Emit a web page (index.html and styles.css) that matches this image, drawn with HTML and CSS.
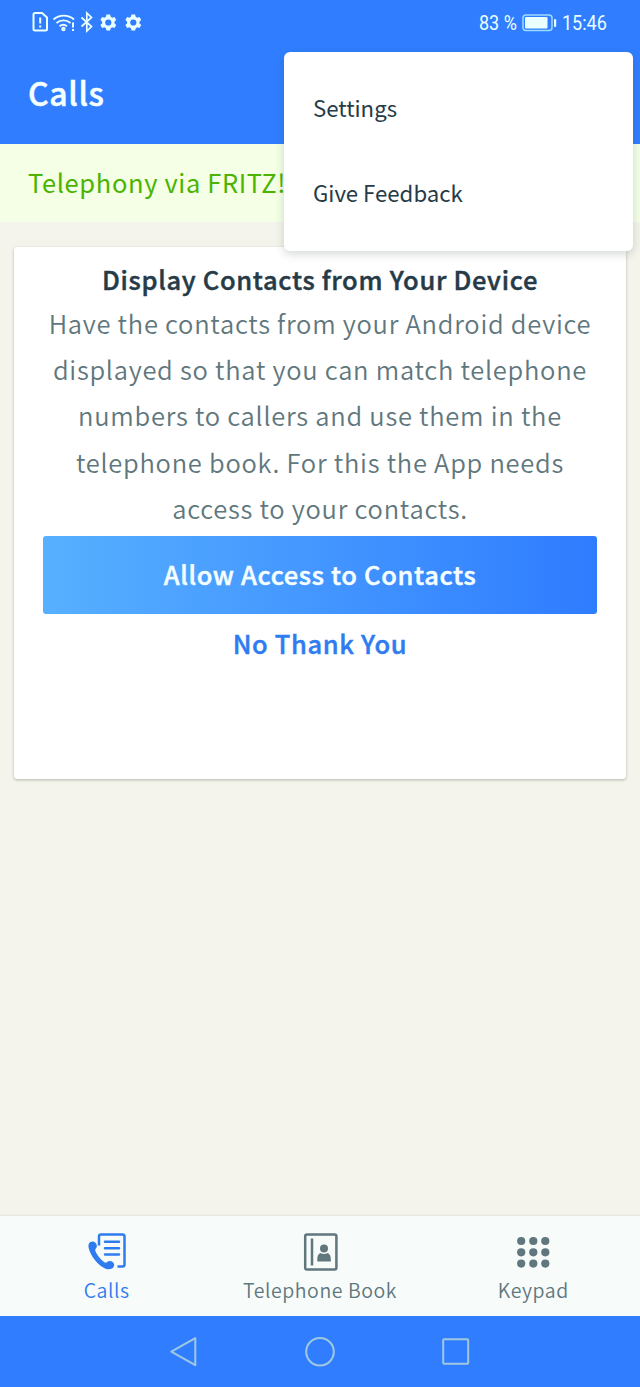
FILE: index.html
```html
<!DOCTYPE html>
<html lang="en">
<head>
<meta charset="utf-8">
<title>Calls</title>
<link rel="stylesheet" href="styles.css">
</head>
<body>
<div class="screen">
  <header class="top">
    <div class="status">
      <svg class="status-icons" width="112" height="24" viewBox="0 0 112 24" fill="none" stroke="#eaffff" stroke-width="2">
        <path d="M4 3h7l5 4.500v11.500a1.500 1.500 0 0 1-1.500 1.500H4A1.500 1.500 0 0 1 2.500 19V4.500A1.500 1.500 0 0 1 4 3z"/>
        <path d="M9.200 7.500v6M9.200 15.500v2"/>
        <path d="M22.500 9.500a15.500 15.500 0 0 1 20.500 0M25.500 13a10.500 10.500 0 0 1 14 0M28.500 16.200a6 6 0 0 1 7.500 0" stroke-width="1.900"/>
        <circle cx="32.400" cy="19" r="2.200" fill="#eaffff" stroke="none"/>
        <path d="M42 12.500v5M42 19v2"/>
        <path d="M50.500 7.500 60.500 16.500 55.800 21V3L60.500 7.500 50.500 16.500" stroke-width="1.700"/>
        <g id="gear" fill="#eaffff" stroke="none">
          <path fill-rule="evenodd" d="M75.500 4.500h3.600l.6 2.300 1.500.9 2.300-.8 1.700 3-1.700 1.700v1.800l1.700 1.700-1.700 3-2.300-.8-1.500.9-.6 2.300h-3.600l-.6-2.300-1.500-.9-2.300.8-1.700-3 1.700-1.700v-1.800l-1.700-1.700 1.700-3 2.300.8 1.500-.9zM77.300 9.400a3.100 3.100 0 1 0 0 6.200 3.100 3.100 0 0 0 0-6.200z"/>
        </g>
        <use href="#gear" x="25"/>
      </svg>
      <div class="status-right">
        <span class="percent">83 %</span>
        <svg class="battery" width="36" height="18" viewBox="0 0 36 18">
          <rect x="1" y="1" width="29" height="15.500" rx="3" fill="none" stroke="#9cdcff" stroke-width="1.500"/>
          <rect x="3" y="3" width="22.500" height="11.500" rx="1" fill="#eaffff"/>
          <rect x="32" y="5" width="2.200" height="8" rx="1" fill="#eaffff"/>
        </svg>
        <span class="time">15:46</span>
      </div>
    </div>
    <h1 class="title">Calls</h1>
  </header>
  <div class="banner">Telephony via FRITZ!</div>
  <main class="content">
    <section class="card">
      <h2 class="card-title">Display Contacts from Your Device</h2>
      <p class="card-text">Have the contacts from your Android device<br>displayed so that you can match telephone<br>numbers to callers and use them in the<br>telephone book. For this the App needs<br>access to your contacts.</p>
      <button class="primary">Allow Access to Contacts</button>
      <button class="link">No Thank You</button>
    </section>
  </main>
  <nav class="tabs">
    <a class="tab active">
      <svg width="40" height="40" viewBox="0 0 40 40" fill="none" stroke="currentColor" stroke-width="2.500">
        <path d="M12 13.500V4.500a2 2 0 0 1 2-2H35.500a2 2 0 0 1 2 2V32.500a2 2 0 0 1-2 2h-5"/>
        <path d="M18 9.800H32M18 16.200H32M18 22.600H32" stroke-linecap="round"/>
        <path fill="currentColor" stroke="none" d="M3 10.300c1.800-1.400 4.200-1.200 5.700.6 1.600 2 1.600 4.200 0 5.900-.8.900-.5 2.100.5 4 2 3.700 4.500 6.700 7.800 9.200 1.200.9 2.100.9 3.100 0 1.800-1.500 4.200-1.300 5.900.3 1.800 1.800 1.700 4.200-.5 5.900-2.400 1.700-5.600 1.400-8.700-.4C9.800 31.800 4 24.300 1.800 16.500c-.7-2.600-.5-4.800 1.200-6.200z"/>
      </svg>
      <span>Calls</span>
    </a>
    <a class="tab">
      <svg width="40" height="40" viewBox="0 0 40 40" fill="none" stroke="currentColor" stroke-width="2.500">
        <rect x="5.200" y="2.500" width="31.200" height="35" rx="1.800"/>
        <path d="M12 6.500v27"/>
        <g fill="currentColor" stroke="none">
          <circle cx="24" cy="16.500" r="4"/>
          <path d="M17.300 29.500v-2.500c0-3 1-4.800 3-6 2.300 1.400 5.200 1.400 7.500 0 2 1.200 3 3 3 6v2.500z"/>
        </g>
      </svg>
      <span>Telephone Book</span>
    </a>
    <a class="tab">
      <svg width="40" height="40" viewBox="0 0 40 40" fill="currentColor">
        <circle cx="8.200" cy="9" r="4.100"/><circle cx="20.300" cy="9" r="4.100"/><circle cx="32.300" cy="9" r="4.100"/>
        <circle cx="8.200" cy="20.300" r="4.100"/><circle cx="20.300" cy="20.300" r="4.100"/><circle cx="32.300" cy="20.300" r="4.100"/>
        <circle cx="8.200" cy="31.600" r="4.100"/><circle cx="20.300" cy="31.600" r="4.100"/><circle cx="32.300" cy="31.600" r="4.100"/>
      </svg>
      <span>Keypad</span>
    </a>
  </nav>
  <footer class="sysnav">
    <svg width="32" height="32" viewBox="0 0 32 32"><path d="M27.300 2.200v27L3.300 15.700z"/></svg>
    <svg width="32" height="32" viewBox="0 0 32 32"><circle cx="16" cy="15.700" r="13.800"/></svg>
    <svg width="32" height="32" viewBox="0 0 32 32"><rect x="3.200" y="3.200" width="25" height="24.500" rx="1"/></svg>
  </footer>
  <div class="menu">
    <div class="menu-item">Settings</div>
    <div class="menu-item">Give Feedback</div>
  </div>
</div>
</body>
</html>
```
FILE: styles.css
```css
* { box-sizing: border-box; }
body { margin: 0; font-family: "Noto Sans CJK SC", "Noto Sans", sans-serif; }
h1, h2, p { margin: 0; }
button { border: 0; padding: 0; font: inherit; background: none; }
.screen {
  position: relative;
  display: flex;
  flex-direction: column;
  width: 640px;
  height: 1387px;
  overflow: hidden;
  background: #f4f4ec;
  white-space: nowrap;
}
.top { height: 144px; background: #307eff; color: #f6ffff; }
.status {
  display: flex;
  justify-content: space-between;
  align-items: center;
  height: 45px;
  padding: 0 33px 0 31.200px;
}
.status-icons { margin-top: -1px; }
.status-right {
  display: flex;
  align-items: center;
  font-family: Roboto, sans-serif;
  font-size: 20px;
  color: #eaffff;
}
.percent { width: 38px; transform: scaleX(.9); transform-origin: left; }
.battery { margin: 1px 4px 0 5px; }
.time { width: 45px; transform: scaleX(.9); transform-origin: left; }
.title {
  padding-left: 28px;
  font-size: 32px;
  font-weight: 500;
  line-height: 95px;
  letter-spacing: .6px;
}
.title, .card-title, .primary, .link { -webkit-text-stroke: .45px currentColor; }
.banner {
  height: 78px;
  padding-left: 28px;
  background: #f4ffe6;
  color: #4cb400;
  font-size: 25.500px;
  line-height: 76px;
  letter-spacing: .62px;
}
.content { flex: 1; padding: 25px 14px 0; }
.card {
  display: flex;
  flex-direction: column;
  height: 532px;
  padding: 11px 29px 0;
  border-radius: 3px;
  background: #fff;
  box-shadow: 0 1px 3px rgba(50, 70, 50, .35);
  text-align: center;
}
.card-title { font-size: 25.500px; font-weight: 500; line-height: 42px; letter-spacing: .68px; color: #263b48; }
.card-text { margin: 0 -29px; font-size: 25.500px; font-weight: 350; line-height: 46.200px; letter-spacing: .74px; color: #5f777d; }
.primary {
  height: 78px;
  margin-top: 5px;
  padding-bottom: 4px;
  border-radius: 3px;
  background: linear-gradient(90deg, #57b0ff, #2f7cff);
  color: #f6ffff;
  font-size: 25.500px;
  font-weight: 500;
  letter-spacing: .64px;
}
.link { margin-top: 5px; line-height: 48px; color: #2f7cf0; font-size: 25.500px; font-weight: 500; letter-spacing: .64px; }
.tabs {
  display: grid;
  grid-template-columns: repeat(3, 1fr);
  height: 100px;
  background: #f7fcfb;
  box-shadow: 0 -1px 2px rgba(80, 80, 60, .1);
}
.tab {
  display: flex;
  flex-direction: column;
  align-items: center;
  padding-top: 16px;
  color: #5f777d;
  font-size: 19.500px;
  font-weight: 350;
  line-height: 36px;
  letter-spacing: .56px;
}
.tab.active { color: #2f7cf0; }
.sysnav {
  display: flex;
  justify-content: center;
  align-items: center;
  gap: 104px;
  height: 71px;
  background: #307eff;
}
.sysnav svg { fill: none; stroke: #9fc8e0; stroke-width: 2; stroke-linejoin: round; }
.menu {
  position: absolute;
  top: 52px;
  left: 284px;
  width: 349px;
  height: 199px;
  padding: 13px 29px;
  border-radius: 6px;
  background: #fff;
  box-shadow: 0 3px 10px rgba(40, 60, 50, .2);
  color: #263b48;
  font-size: 22.200px;
}
.menu-item { line-height: 85px; }
```
